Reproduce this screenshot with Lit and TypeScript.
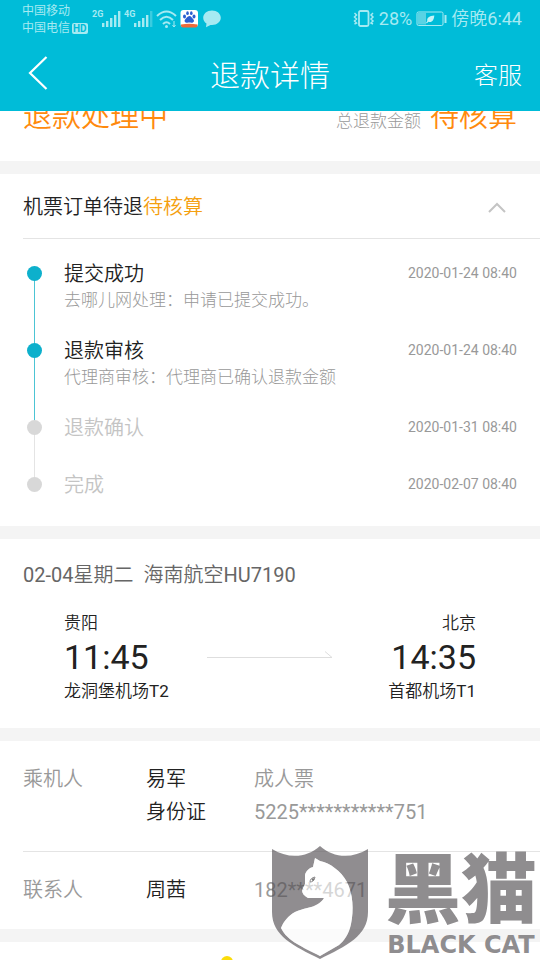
import { LitElement, html, css, svg } from "lit";
import { customElement, state } from "lit/decorators.js";

interface Step {
  title: string;
  detail?: string;
  time: string;
  done: boolean;
}

const STEPS: Step[] = [
  { title: "提交成功", detail: "去哪儿网处理：申请已提交成功。", time: "2020-01-24 08:40", done: true },
  { title: "退款审核", detail: "代理商审核：代理商已确认退款金额", time: "2020-01-24 08:40", done: true },
  { title: "退款确认", time: "2020-01-31 08:40", done: false },
  { title: "完成", time: "2020-02-07 08:40", done: false },
];

const CAT =
  "M44 12L49 15C59 17 70 25 76 36C82 48 83 64 80 78C78 88 73 95 68 99L49 110C32 101 16 95 10 82C13 75 17 70 24 66C32 62 41 62 47 58C50 56 52 54 53 52L37 52C33 50 31 47 31 44L34 38L34 29C35 25 38 22 42 21Z";

@customElement("status-bar")
export class StatusBar extends LitElement {
  static styles = css`
    :host {
      display: flex;
      justify-content: space-between;
      align-items: center;
      height: 37px;
      padding: 0 18px 0 22px;
      color: #a6eaf2;
      font-size: 18px;
      font-weight: 400;
    }
    .group { display: flex; align-items: center; }
    .carriers { font-size: 12px; line-height: 17px; padding-top: 2px; }
    .line { display: flex; align-items: center; gap: 2px; }
    .hd {
      font-size: 10px;
      line-height: 11px;
      font-weight: 700;
      padding: 0 1px;
      border-radius: 2px;
      background: #a6eaf2;
      color: #00bcd8;
    }
    .icons { margin-left: 4px; }
    .right { gap: 4px; }
    .cjk { font-weight: 350; }
    svg { display: block; }
  `;

  private bars(x: number, last: number) {
    return [4, 6, 9, 12, 16].map(
      (h, i) => svg`<rect x=${x + i * 4} y=${22 - h} width="2.4" height=${h} fill="#a6eaf2" opacity=${i === 4 ? last : 1} />`
    );
  }

  render() {
    return html`
      <div class="group">
        <div class="carriers">
          <div class="line">中国移动</div>
          <div class="line">中国电信 <span class="hd">HD</span></div>
        </div>
        <svg class="icons" width="130" height="28" viewBox="0 0 130 28" aria-hidden="true">
          <text x="0" y="12" font-size="9" font-weight="700" fill="#a6eaf2">2G</text>
          ${this.bars(10, 1)}
          <text x="32" y="12" font-size="9" font-weight="700" fill="#a6eaf2">4G</text>
          ${this.bars(42, 0.35)}
          <g fill="none" stroke="#a6eaf2" stroke-width="2">
            <path d="M65 11Q74.500 2 84 11" />
            <path d="M68 15Q74.500 8.500 81 15" />
            <path d="M71 19Q74.500 15.500 78 19" />
          </g>
          <circle cx="74.500" cy="21.500" r="1.500" fill="#a6eaf2" />
          <path d="M82 16v6M80.500 20l1.500 2 1.500-2" stroke="#a6eaf2" fill="none" />
          <rect x="88.500" y="5" width="17.500" height="17" rx="3" fill="#fff" />
          <path d="M89 19.500q8-1.500 16.500 0v1q0 2-2 2H91q-2 0-2-2z" fill="#ee6a3a" />
          <g fill="#2b5fd0">
            <ellipse cx="92.500" cy="11.500" rx="1.500" ry="1.900" />
            <ellipse cx="95.500" cy="8.200" rx="1.300" ry="1.900" />
            <ellipse cx="99.300" cy="8.200" rx="1.300" ry="1.900" />
            <ellipse cx="102" cy="11.500" rx="1.500" ry="1.900" />
            <path d="M97.300 11c2 0 2.700 2.300 4 3.300 1.700 1.800 0 3.800-2 3.500-1.400-.3-2.600-.3-4 0-2 .3-3.700-1.700-2-3.500 1.300-1 2-3.300 4-3.300z" />
          </g>
          <path d="M120 5.500c5 0 8.800 3.200 8.800 7.200s-3.800 7.200-8.800 7.200l-1.500 0-4.500 2.300.5-3.600c-2-1.400-3.300-3.500-3.300-5.900 0-4 3.800-7.200 8.800-7.200z" fill="#a6eaf2" />
        </svg>
      </div>
      <div class="group right">
        <svg width="22" height="18" viewBox="0 0 22 18" fill="none" stroke="#a6eaf2" aria-hidden="true">
          <rect x="6" y="1" width="9.500" height="15" rx="1.500" stroke-width="1.800" />
          <path d="M1.500 3l2 2-2 2 2 2-2 2 2 2-2 1M20 3l-2 2 2 2-2 2 2 2-2 2 2 1" stroke-width="1.500" />
        </svg>
        <span>28%</span>
        <svg width="31" height="16" viewBox="0 0 31 16" aria-hidden="true">
          <rect x="1" y="1" width="26" height="13.500" rx="1.500" fill="none" stroke="#a6eaf2" />
          <rect x="2" y="2" width="8" height="11.500" fill="#59d3e4" />
          <rect x="28.500" y="4" width="2" height="8" fill="#a6eaf2" />
          <path d="M10 12l1.300-2c-.6-3.500 2.200-5 7-5.500-.4 4.500-2 7.300-6 6.300l-1.300 1.500z" fill="#c5f3f7" />
        </svg>
        <span><span class="cjk">傍晚</span>6:44</span>
      </div>
    `;
  }
}

@customElement("black-cat-mark")
export class BlackCatMark extends LitElement {
  static styles = css`
    :host { display: flex; align-items: flex-end; gap: 16px; color: #8f8d8f; }
    svg { display: block; }
    .words { display: flex; flex-direction: column; align-items: center; gap: 8px; }
    .zh { font: 900 76px/76px "Noto Sans CJK SC", sans-serif; }
    .en { font: 700 24px/30px "DejaVu Sans", sans-serif; white-space: nowrap; }
  `;

  render() {
    return html`
      <svg width="98" height="114" viewBox="0 0 98 114" aria-hidden="true">
        <path
          fill="#555055" fill-opacity=".65" fill-rule="evenodd"
          d=${"M1 3C17 13 36 12 49 0C62 12 81 13 97 3V66C97 90 75 100 49 113C23 100 1 90 1 66Z" + CAT}
        />
        <path fill="#fff" fill-opacity=".6" d=${CAT} />
        <path d="M39 36q0-4 5-5-1 5-5 5z" fill="none" stroke="#8f8d8f" />
        <circle cx="42" cy="33.500" r="1.300" fill="#777" />
      </svg>
      <div class="words"><span class="zh">黑猫</span><span class="en">BLACK CAT</span></div>
    `;
  }
}

@customElement("app-root")
export class AppRoot extends LitElement {
  static styles = css`
    :host {
      display: flex;
      flex-direction: column;
      position: relative;
      height: 100vh;
      overflow: hidden;
      background: #f4f4f4;
      color: #222;
      font-family: Roboto, "Noto Sans CJK SC", sans-serif;
      font-size: 20px;
      font-weight: 350;
      line-height: 28px;
    }
    * { box-sizing: border-box; }
    h1, h2, p, ol, dl, dd, dt { margin: 0; padding: 0; font-weight: inherit; font-size: inherit; }
    button { border: 0; padding: 0; background: none; font: inherit; color: inherit; cursor: pointer; }
    svg { display: block; }

    .top { flex: none; background: #00bcd8; }
    .nav {
      display: grid;
      grid-template-columns: 1fr auto 1fr;
      align-items: center;
      height: 74px;
      padding: 3px 18px 0;
      color: #fff;
      font-weight: 300;
    }
    .nav h1 { font-size: 30px; line-height: 40px; }
    .back { justify-self: start; padding: 0 10px 5px; }
    .help { justify-self: end; font-size: 24px; }

    .scroll { flex: 1; min-height: 0; overflow: hidden; }
    .page { display: flex; flex-direction: column; gap: 13px; margin-top: -14px; }
    .card { background: #fff; }

    .summary {
      display: flex;
      justify-content: space-between;
      padding: 0 23px 20px;
      color: #ff8a0d;
      font-size: 29px;
      line-height: 40px;
    }
    .total { display: flex; align-items: baseline; gap: 9px; }
    .total small { font-size: 17px; color: #999; font-weight: 300; }

    .head {
      display: flex;
      align-items: center;
      justify-content: space-between;
      height: 65px;
      margin-left: 23px;
      padding: 2px 34px 0 0;
      border-bottom: 1px solid #e4e4e4;
    }
    .amber { color: #f5a00f; }
    .folded svg { transform: rotate(180deg); }

    .steps { list-style: none; padding: 21px 23px 27px 27px; }
    .step { display: flex; gap: 22px; min-height: 57px; padding-bottom: 25px; position: relative; }
    .step:last-child { min-height: 0; padding-bottom: 0; }
    .dot { flex: none; width: 15px; height: 15px; margin-top: 6px; border-radius: 50%; background: #d8d8d8; z-index: 1; }
    .step::before { content: ""; position: absolute; left: 7px; top: 14px; bottom: -14px; width: 1px; background: #e4e4e4; }
    .step:last-child::before { display: none; }
    .done .dot { background: #0db0cc; }
    .done::before { background: #4cc4d4; }
    .body { flex: 1; color: #c4c4c4; }
    .done .body { color: #222; }
    .done .detail { font-size: 17px; line-height: 24px; color: #999; font-weight: 300; }
    time { font-size: 14px; line-height: 26px; color: #999; font-weight: 400; }

    .flight { padding: 22px 23px 25px; }
    .flight h2 { color: #666; white-space: pre; font-weight: 400; }
    .flight h2 span { font-weight: 350; }
    .route { display: flex; justify-content: space-between; align-items: center; margin: 22px 41px 0; font-size: 17px; line-height: 24px; }
    .route svg { margin-right: 18px; }
    .end { text-align: right; }
    .clock { font-size: 34px; line-height: 44px; font-weight: 400; }
    .gate { font-weight: 400; }

    .person {
      display: grid;
      grid-template-columns: 123px 108px 1fr;
      margin-left: 23px;
      padding: 22px 0;
      line-height: 33px;
      color: #999;
    }
    .person + .person { border-top: 1px solid #e4e4e4; }
    .name { color: #222; }
    .number { font-weight: 400; }

    .more { padding: 14px 221px 40px; }
    .sun { width: 12px; height: 12px; border-radius: 50%; background: #fbdc0a; }
    .mark { position: absolute; right: 3px; bottom: 0; pointer-events: none; }
  `;

  @state() private open = true;

  render() {
    return html`
      <header class="top">
        <status-bar></status-bar>
        <nav class="nav">
          <button class="back" aria-label="返回">
            <svg width="20" height="34" viewBox="0 0 20 34" fill="none" stroke="#fff" stroke-width="2.200"><path d="M18.500 1L2 17l16.500 16" /></svg>
          </button>
          <h1>退款详情</h1>
          <button class="help">客服</button>
        </nav>
      </header>
      <main class="scroll">
        <div class="page">
          <section class="card summary">
            <p>退款处理中</p>
            <p class="total"><small>总退款金额</small>待核算</p>
          </section>

          <section class="card">
            <div class="head">
              <h2>机票订单待退<span class="amber">待核算</span></h2>
              <button
                class=${this.open ? "" : "folded"}
                aria-label="展开或收起"
                aria-expanded=${this.open}
                @click=${() => (this.open = !this.open)}
              >
                <svg width="18" height="11" viewBox="0 0 18 11" fill="none" stroke="#c4c4c4" stroke-width="2"><path d="M1 10l8-8 8 8" /></svg>
              </button>
            </div>
            ${this.open
              ? html`<ol class="steps">
                  ${STEPS.map(
                    (s) => html`<li class="step ${s.done ? "done" : ""}">
                      <span class="dot"></span>
                      <div class="body">
                        <p>${s.title}</p>
                        ${s.detail ? html`<p class="detail">${s.detail}</p>` : ""}
                      </div>
                      <time>${s.time}</time>
                    </li>`
                  )}
                </ol>`
              : ""}
          </section>

          <section class="card flight">
            <h2>02-04<span>星期二</span>  <span>海南航空</span>HU7190</h2>
            <div class="route">
              <div>
                <p>贵阳</p>
                <p class="clock">11:45</p>
                <p>龙洞堡机场<span class="gate">T2</span></p>
              </div>
              <svg width="126" height="14" viewBox="0 0 126 14" fill="none" stroke="#dedede" aria-hidden="true"><path d="M0 7.500h125l-7-6" /></svg>
              <div class="end">
                <p>北京</p>
                <p class="clock">14:35</p>
                <p>首都机场<span class="gate">T1</span></p>
              </div>
            </div>
          </section>

          <section class="card">
            <dl class="person">
              <dt>乘机人</dt>
              <dd class="name">易军<br />身份证</dd>
              <dd>成人票<br /><span class="number">5225***********751</span></dd>
            </dl>
            <dl class="person">
              <dt>联系人</dt>
              <dd class="name">周茜</dd>
              <dd class="number">182****4671</dd>
            </dl>
          </section>

          <section class="card more"><div class="sun"></div></section>
        </div>
      </main>
      <black-cat-mark class="mark"></black-cat-mark>
    `;
  }
}
